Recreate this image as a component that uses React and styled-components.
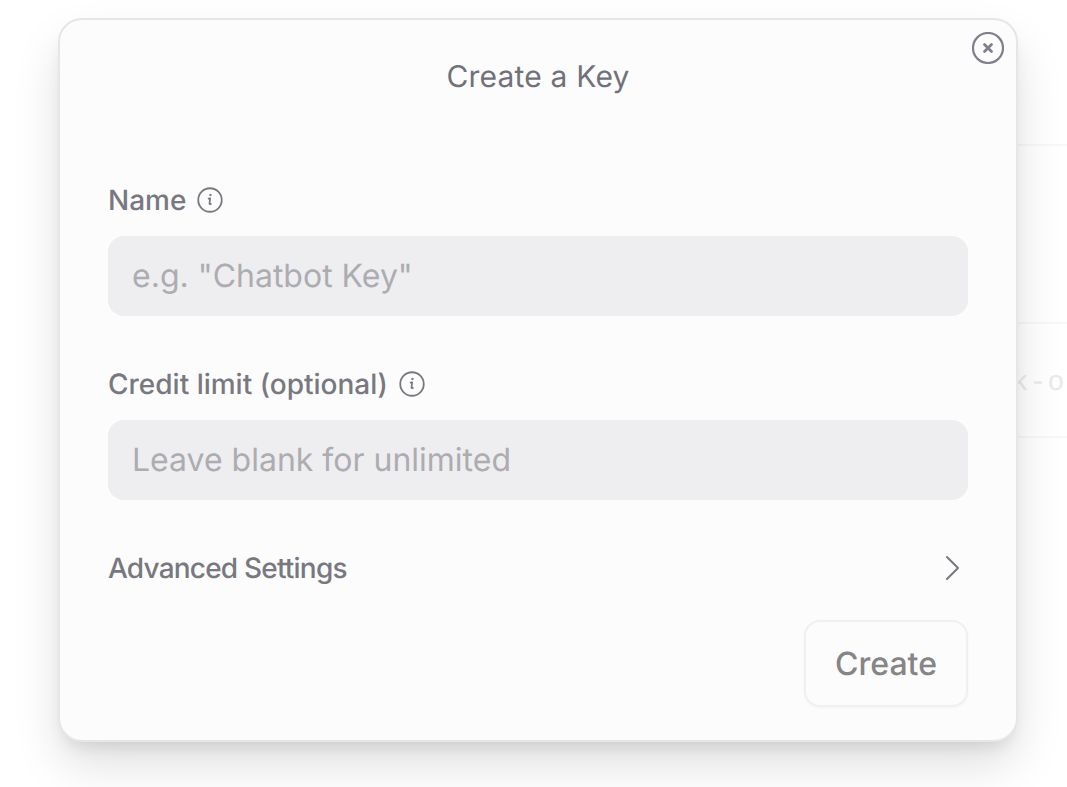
import React from "react";
import styled, { createGlobalStyle } from "styled-components";

const Global = createGlobalStyle`
  html, body { margin: 0; height: 100%; background: #fff; overflow: hidden; }
  #root { height: 100%; }
  * { box-sizing: border-box; }
  input::placeholder { color: #acacb1; opacity: 1; }
`;

const Page = styled.div`
  position: relative;
  width: 1067px;
  height: 787px;
  overflow: hidden;
  background: #fff;
  font-family: Inter, "Noto Sans", sans-serif;
  text-rendering: geometricPrecision;
  -webkit-font-smoothing: antialiased;
`;

const BackdropTable = styled.div`
  display: flex;
  flex-direction: column;
  margin-left: 1018px;
  padding-top: 144px;
  width: 49px;
  overflow: hidden;
`;

const BackdropRow = styled.div`
  height: ${p => p.$h}px;
  border-top: 2px solid #f7f7f8;
  display: flex;
  align-items: center;
  white-space: nowrap;
  font-family: "Liberation Mono", monospace;
  font-size: 28px;
  letter-spacing: 1px;
  color: #e9e9eb;
`;

const BackdropKey = styled.span`
  margin-left: -24px;
  padding-top: 6px;
`;

const Modal = styled.div`
  position: absolute;
  left: 58px;
  top: 18px;
  width: 960px;
  height: 724px;
  padding: 0 48px;
  display: flex;
  flex-direction: column;
  background: #fcfcfc;
  border: 2px solid #e6e6e7;
  border-radius: 24px;
  box-shadow: 0 24px 48px -2px rgba(0, 0, 0, 0.13), 0 10px 16px -6px rgba(0, 0, 0, 0.1);
`;

const Close = styled.button`
  position: absolute;
  top: 12px;
  right: 12px;
  width: 32px;
  height: 32px;
  padding: 0;
  border: 0;
  background: none;
  color: #80808b;
  display: flex;
`;

const Title = styled.h2`
  margin: 37px 0 0;
  height: 40px;
  text-align: center;
  font-size: 30px;
  line-height: 40px;
  font-weight: 400;
  letter-spacing: 0.2px;
  color: #71717a;
`;

const Field = styled.div`
  display: flex;
  flex-direction: column;
  gap: 18px;
  margin-top: ${p => p.$mt}px;
`;

const LabelRow = styled.div`
  display: flex;
  align-items: center;
  gap: 11px;
  height: 36px;
  font-size: 28px;
  font-weight: 500;
  color: #787880;
`;

const Input = styled.input`
  width: 100%;
  height: 80px;
  padding: 0 24px 2px;
  border: 0;
  outline: 0;
  border-radius: 16px;
  background: #eeeef0;
  font-family: inherit;
  font-size: 32px;
  text-rendering: geometricPrecision;
  color: #71717a;
`;

const Advanced = styled.div`
  display: flex;
  align-items: center;
  justify-content: space-between;
  margin-top: 50px;
  height: 36px;
  font-size: 28px;
  font-weight: 500;
  letter-spacing: -0.8px;
  color: #787880;
`;

const Footer = styled.div`
  display: flex;
  justify-content: flex-end;
  margin-top: 34px;
`;

const Create = styled.button`
  width: 164px;
  height: 87px;
  padding: 0;
  border: 2px solid #f0f0f1;
  border-radius: 16px;
  background: #fcfcfc;
  box-shadow: 0 1px 3px rgba(0, 0, 0, 0.04);
  font-family: inherit;
  font-size: 32px;
  font-weight: 500;
  text-rendering: geometricPrecision;
  color: #858587;
`;

const Info = () => (
  <svg width="26" height="26" viewBox="0 0 26 26" fill="none" stroke="currentColor" strokeLinecap="round" strokeLinejoin="round">
    <circle cx="13" cy="13" r="11.75" strokeWidth="1.8" />
    <path d="M11.6 11.6 13.2 11.4 12.5 16.4c-.1.8.5 1 1.4.5" strokeWidth="1.7" />
    <circle cx="13.3" cy="8" r="0.7" fill="currentColor" strokeWidth="1" />
  </svg>
);

export default function App() {
  return (
    <Page>
      <Global />
      <BackdropTable>
        <BackdropRow $h={178} />
        <BackdropRow $h={114}><BackdropKey>sk-or-v1</BackdropKey></BackdropRow>
        <BackdropRow $h={2} />
      </BackdropTable>
      <Modal>
        <Close aria-label="Close">
          <svg width="32" height="32" viewBox="0 0 32 32" fill="none" stroke="currentColor" strokeLinecap="round">
            <circle cx="16" cy="16" r="15" strokeWidth="2.2" />
            <path d="M12.5 12.5 19.5 19.5M19.5 12.5 12.5 19.5" strokeWidth="2.8" />
          </svg>
        </Close>
        <Title>Create a Key</Title>
        <Field $mt={85}>
          <LabelRow>Name <Info /></LabelRow>
          <Input placeholder={'e.g. "Chatbot Key"'} />
        </Field>
        <Field $mt={50}>
          <LabelRow>Credit limit (optional) <Info /></LabelRow>
          <Input placeholder="Leave blank for unlimited" />
        </Field>
        <Advanced>
          Advanced Settings
          <svg width="32" height="32" viewBox="0 0 32 32" fill="none" stroke="currentColor" strokeWidth="2" strokeLinecap="round" strokeLinejoin="round">
            <path d="M11 5 22 16 11 27" />
          </svg>
        </Advanced>
        <Footer><Create>Create</Create></Footer>
      </Modal>
    </Page>
  );
}
